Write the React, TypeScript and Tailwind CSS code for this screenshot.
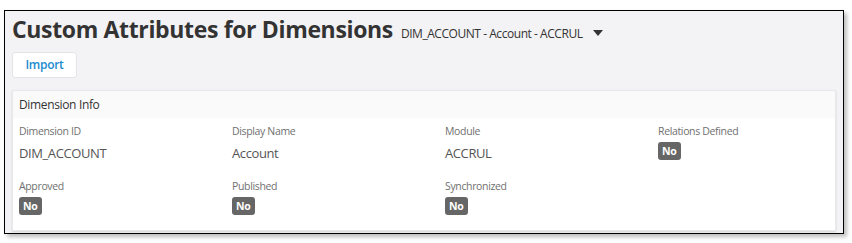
import React from 'react';

const font = { fontFamily: '"Open Sans", "Noto Sans", sans-serif' };

function Badge({ children }: { children: React.ReactNode }) {
  return (
    <span className="flex h-[18px] w-fit items-center rounded-[3px] bg-[#666666] px-[4px] text-[10.5px] font-bold leading-none tracking-[-0.2px] text-white">
      {children}
    </span>
  );
}

function Field({ label, value, badge }: { label: string; value?: string; badge?: string }) {
  return (
    <div className="w-[213px] shrink-0">
      <div className="text-[10.5px] leading-[16px] tracking-[-0.35px] text-[#707070]">{label}</div>
      {value && <div className="mt-[5px] text-[13px] leading-[18px] tracking-[-0.4px] text-[#555555]">{value}</div>}
      {badge && (
        <div className="mt-[3px]">
          <Badge>{badge}</Badge>
        </div>
      )}
    </div>
  );
}

export default function App() {
  return (
    <div className="h-[243px] w-[852px] bg-white pl-[4px] pt-[10px]" style={font}>
      <div className="h-[224px] w-[840px] border border-black bg-[#f3f2f5] px-[7px] pt-[5px] shadow-[3px_3px_4px_rgba(0,0,0,0.25)]">
        <div className="flex items-baseline">
          <h1 className="text-[23px] font-bold leading-[26px] tracking-[-0.35px] text-[#333333]">
            Custom Attributes for Dimensions
          </h1>
          <button className="ml-[8px] flex items-center text-[12px] tracking-[-0.45px] text-[#333333]">
            DIM_ACCOUNT - Account - ACCRUL
            <svg className="mb-[2px] ml-[10px]" width="10" height="6" viewBox="0 0 10 6">
              <path d="M0 0 L10 0 L5 6 Z" fill="#333333" />
            </svg>
          </button>
        </div>
        <button className="mt-[9px] h-[26px] w-[65px] rounded-[3px] border border-[#e4e4e6] bg-white text-[12px] font-semibold tracking-[-0.3px] text-[#1b8bd0]">
          Import
        </button>
        <div className="mt-[12px] border border-[#e8e8ea] bg-white shadow-[0_1px_2px_rgba(0,0,0,0.12)]">
          <div className="flex h-[27px] items-center bg-[#fafafa] px-[6px] text-[12px] tracking-[-0.35px] text-[#333333]">
            Dimension Info
          </div>
          <div className="px-[6px] pb-[15px] pt-[5px]">
            <div className="flex">
              <Field label="Dimension ID" value="DIM_ACCOUNT" />
              <Field label="Display Name" value="Account" />
              <Field label="Module" value="ACCRUL" />
              <Field label="Relations Defined" badge="No" />
            </div>
            <div className="mt-[16px] flex">
              <Field label="Approved" badge="No" />
              <Field label="Published" badge="No" />
              <Field label="Synchronized" badge="No" />
            </div>
          </div>
        </div>
      </div>
    </div>
  );
}
